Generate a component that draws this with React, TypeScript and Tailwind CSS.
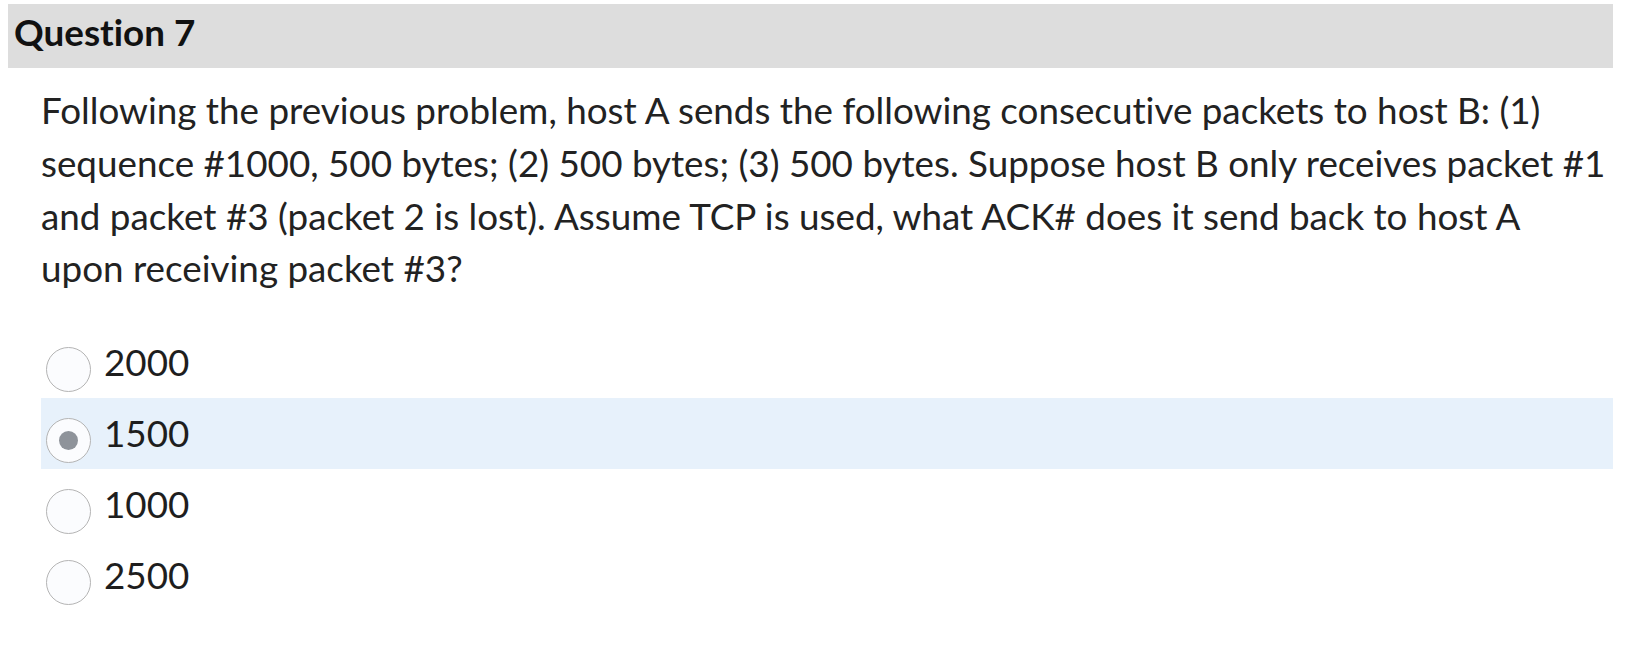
import React from "react";

const options = [
  { label: "2000", selected: false },
  { label: "1500", selected: true },
  { label: "1000", selected: false },
  { label: "2500", selected: false },
];

export default function App() {
  return (
    <div
      className="w-[1633px] h-[656px] bg-white text-[#222222] overflow-hidden [font-variant-ligatures:none]"
      style={{ fontFamily: "Lato, 'Open Sans', sans-serif" }}
    >
      <div className="pt-[4px] pl-[8px] w-[1613px]">
        <div className="h-[64px] bg-[#dddddd] flex items-center pl-[6px] pb-[7px]">
          <h2 className="text-[36.8px] font-bold text-[#111111] leading-none">Question 7</h2>
        </div>
        <div className="pl-[33px]">
          <p className="mt-[16px] text-[36.8px] leading-[52.8px] whitespace-nowrap font-normal">
            Following the previous problem, host A sends the following consecutive packets to host B: (1)
            <br />
            sequence #1000, 500 bytes; (2) 500 bytes; (3) 500 bytes. Suppose host B only receives packet #1
            <br />
            and packet #3 (packet 2 is lost). Assume TCP is used, what ACK# does it send back to host A
            <br />
            upon receiving packet #3?
          </p>
          <div className="mt-[32px] flex flex-col">
            {options.map((o) => (
              <label
                key={o.label}
                className={
                  "flex items-start h-[71px] pl-[5px] " + (o.selected ? "bg-[#e7f1fb]" : "bg-transparent")
                }
              >
                <span className="mt-[20px] w-[45px] h-[45px] rounded-full border border-[#b4b4b4] bg-[#fbfcfe] flex items-center justify-center shrink-0">
                  {o.selected && <span className="w-[19px] h-[19px] rounded-full bg-[#8e939a]" />}
                </span>
                <span className="ml-[13px] text-[36.8px] leading-[70px] text-[#1e1e1e] font-normal">{o.label}</span>
              </label>
            ))}
          </div>
        </div>
      </div>
    </div>
  );
}
